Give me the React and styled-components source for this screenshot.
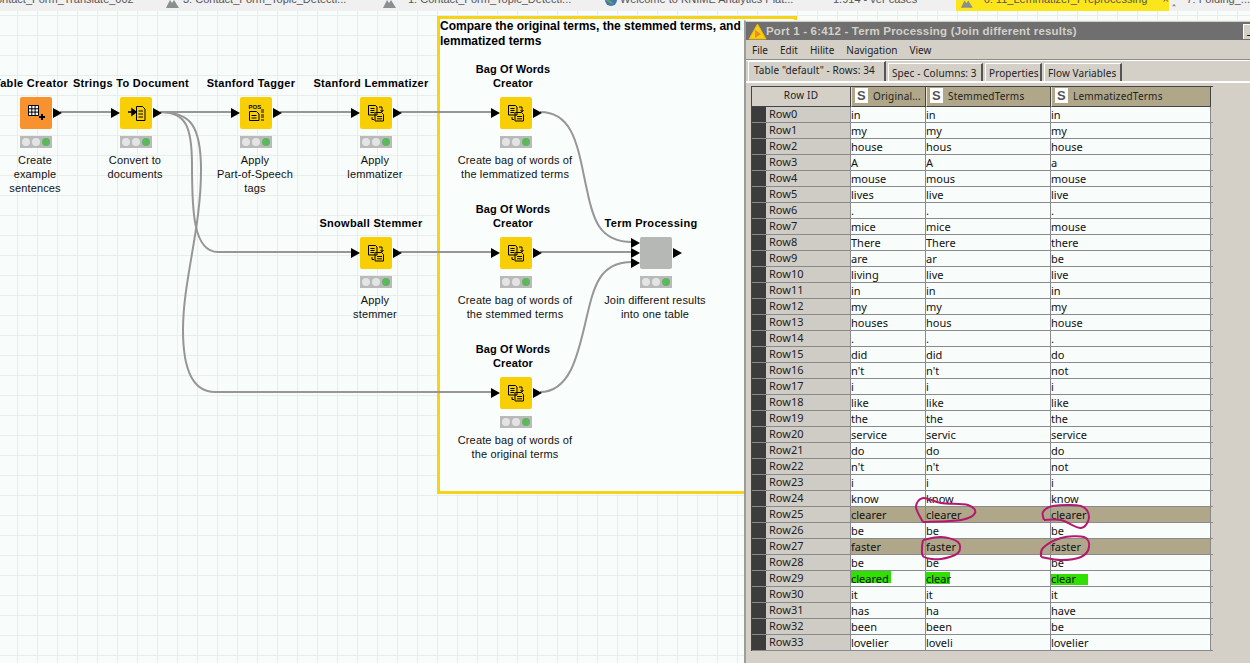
import React from 'react';
import styled, { createGlobalStyle } from 'styled-components';

const GlobalStyle = createGlobalStyle`
	html, body {
		margin: 0;
		padding: 0;
		height: 100%;
		overflow: hidden;
		background: #f8fcfa;
	}
	#root {
		height: 100%;
	}
`;

const tabs = [
	{ text: 'Contact_Form_Translate_002', width: 165, icon: 'none', indent: -12 },
	{ text: '3: Contact_Form_Topic_Detecti...', width: 217, icon: 'warn', indent: 2 },
	{ text: '1: Contact_Form_Topic_Detecti...', width: 222, icon: 'warn', indent: 10 },
	{ text: 'Welcome to KNIME Analytics Plat...', width: 229, icon: 'globe', indent: 2 },
	{ text: '1.914 - ver cases', width: 123, icon: 'none', indent: 0 },
	{ text: '6: 11_Lemmatizer_Preprocessing     ×', width: 213, icon: 'warn', indent: 9, pad: 4, active: true },
	{ text: '7: Folding_...', width: 81, icon: 'warn', indent: 10, pad: 3 },
];

const nodes = [
	{ x: 20, y: 86, title: ['Table Creator'], desc: ['Create', 'example', 'sentences'], icon: 'table', color: '#f7922e', ports: { in: [], out: true } },
	{ x: 120, y: 86, title: ['Strings To Document'], desc: ['Convert to', 'documents'], icon: 'convert', color: '#f8cf05', ports: { in: [16], out: true } },
	{ x: 240, y: 86, title: ['Stanford Tagger'], desc: ['Apply', 'Part-of-Speech', 'tags'], icon: 'pos', color: '#f8cf05', ports: { in: [16], out: true } },
	{ x: 360, y: 86, title: ['Stanford Lemmatizer'], desc: ['Apply', 'lemmatizer'], icon: 'docs', color: '#f8cf05', ports: { in: [16], out: true } },
	{ x: 500, y: 86, title: ['Bag Of Words', 'Creator'], desc: ['Create bag of words of', 'the lemmatized terms'], icon: 'docs', color: '#f8cf05', ports: { in: [16], out: true } },
	{ x: 360, y: 226, title: ['Snowball Stemmer'], desc: ['Apply', 'stemmer'], icon: 'docs', color: '#f8cf05', ports: { in: [16], out: true } },
	{ x: 500, y: 226, title: ['Bag Of Words', 'Creator'], desc: ['Create bag of words of', 'the stemmed terms'], icon: 'docs', color: '#f8cf05', ports: { in: [16], out: true } },
	{ x: 640, y: 226, title: ['Term Processing'], desc: ['Join different results', 'into one table'], icon: 'none', color: '#b5b8b5', ports: { in: [6, 16, 26], out: true } },
	{ x: 500, y: 366, title: ['Bag Of Words', 'Creator'], desc: ['Create bag of words of', 'the original terms'], icon: 'docs', color: '#f8cf05', ports: { in: [16], out: true } },
];

const wires = [
	'M60 101 H112',
	'M160 101 H232',
	'M280 101 H352',
	'M400 101 H492',
	'M400 241 H492',
	'M540 241 H632',
	'M540 101 C 575 101, 578 139, 587 179 C 593 209, 600 231, 632 231',
	'M540 381 C 570 381, 578 344, 586 309 C 594 274, 600 251, 632 251',
	'M160 101 C 185 101, 192 114, 192 154 C 192 199, 193 241, 218 241 H352',
	'M160 101 C 190 101, 201 114, 201 159 C 201 219, 183 269, 183 319 C 183 364, 195 381, 215 381 H492',
];

const rows = [
	['in', 'in', 'in'], ['my', 'my', 'my'], ['house', 'hous', 'house'], ['A', 'A', 'a'],
	['mouse', 'mous', 'mouse'], ['lives', 'live', 'live'], ['.', '.', '.'], ['mice', 'mice', 'mouse'],
	['There', 'There', 'there'], ['are', 'ar', 'be'], ['living', 'live', 'live'], ['in', 'in', 'in'],
	['my', 'my', 'my'], ['houses', 'hous', 'house'], ['.', '.', '.'], ['did', 'did', 'do'],
	["n't", "n't", 'not'], ['i', 'i', 'i'], ['like', 'like', 'like'], ['the', 'the', 'the'],
	['service', 'servic', 'service'], ['do', 'do', 'do'], ["n't", "n't", 'not'], ['i', 'i', 'i'],
	['know', 'know', 'know'], ['clearer', 'clearer', 'clearer'], ['be', 'be', 'be'], ['faster', 'faster', 'faster'],
	['be', 'be', 'be'], ['cleared', 'clear', 'clear'], ['it', 'it', 'it'], ['has', 'ha', 'have'],
	['been', 'been', 'be'], ['lovelier', 'loveli', 'lovelier'],
];

const selectedRows = [25, 27];
const markers = { 0: { width: 40, top: 0, height: 12 }, 1: { width: 24, top: 1, height: 12 }, 2: { width: 37, top: 3, height: 11 } };

const columns = [
	{ name: 'Original...' },
	{ name: 'StemmedTerms' },
	{ name: 'LemmatizedTerms' },
];

// pen circles, in table coordinates
const scribbles = [
	[[171, 436], [164, 421], [171, 412], [189, 417], [216, 419], [223, 427], [209, 434], [171, 436]],
	[[292, 434], [291, 426], [301, 420], [329, 420], [337, 431], [329, 442], [309, 434], [292, 434]],
	[[171, 454], [189, 451], [206, 456], [206, 467], [189, 473], [172, 471], [170, 462], [171, 454]],
	[[289, 471], [291, 462], [309, 452], [332, 451], [337, 461], [329, 471], [309, 474], [289, 471]],
];

const smooth = (pts) => {
	let d = `M${pts[0][0]} ${pts[0][1]}`;
	for (let i = 0; i < pts.length - 1; i++) {
		const p0 = pts[Math.max(i - 1, 0)];
		const p1 = pts[i];
		const p2 = pts[i + 1];
		const p3 = pts[Math.min(i + 2, pts.length - 1)];
		d += ` C${p1[0] + (p2[0] - p0[0]) / 6} ${p1[1] + (p2[1] - p0[1]) / 6}, ${p2[0] - (p3[0] - p1[0]) / 6} ${p2[1] - (p3[1] - p1[1]) / 6}, ${p2[0]} ${p2[1]}`;
	}
	return d;
};

const NodeIcon = ({ type }) => {
	if (type === 'table') {
		return (
			<svg width="32" height="32" viewBox="0 0 32 32">
				<path d="M8.5 8.5h10v10h-10zM8.5 11.8h10M8.5 15.1h10M11.8 8.5v10M15.1 8.5v10" fill="#fff" stroke="#000" />
				<path d="M19 20h6M22 17v6" stroke="#000" strokeWidth="2" fill="none" />
			</svg>
		);
	}
	if (type === 'convert') {
		return (
			<svg width="32" height="32" viewBox="0 0 32 32">
				<path d="M8 15h5M12 12l4 3-4 3z" stroke="#000" strokeWidth="1.5" fill="#000" />
				<path d="M16.5 9.5h6l2.5 2.5v11.5h-8.5zM18.5 14h4.5M18.5 17h4.5M18.5 20h4.5" stroke="#000" fill="none" />
			</svg>
		);
	}
	if (type === 'pos') {
		return (
			<svg width="32" height="32" viewBox="0 0 32 32">
				<text x="8.5" y="12" fontFamily="Liberation Sans, sans-serif" fontSize="6" fontWeight="700" fill="#000">POS</text>
				<path d="M9.5 14.5h7l2.5 2.5v6.5h-9.5zM11.5 18.5h5M11.5 21h5" stroke="#000" fill="none" />
				<path d="M21 13h3M21 15h3M21 18h3M21 20h3M21 23h3" stroke="#000" strokeWidth="1.2" fill="none" />
			</svg>
		);
	}
	if (type === 'docs') {
		return (
			<svg width="32" height="32" viewBox="0 0 32 32">
				<path d="M8.5 8.5h7l1.5 1.5v8h-8.5zM10.5 11.5h4M10.5 13.5h4M10.5 15.5h4" stroke="#000" fill="none" />
				<path d="M15.5 15.5h6l2 2v6.5h-8.500v-8zM17 19.5h5M17 21.8h5" stroke="#000" fill="none" />
				<path d="M19 10h3v4M20.5 13l1.5 2 1.5-2M12 20v2.5h2" stroke="#000" fill="none" />
			</svg>
		);
	}
	return null;
};

const TabIcon = ({ type }) => {
	if (type === 'warn') {
		return (
			<svg width="16" height="11" viewBox="0 0 16 11">
				<path d="M1 8L5 0L7 3L9 0L14 8Z" fill="#8a8f8f" />
			</svg>
		);
	}
	if (type === 'globe') {
		return (
			<svg width="14" height="11" viewBox="0 0 14 11">
				<circle cx="7" cy="0" r="6" fill="#3f78b0" />
				<path d="M3 0c2 2 4 1 5 4" stroke="#6ea05a" strokeWidth="2" fill="none" />
			</svg>
		);
	}
	return null;
};

const App = () => {
	return (
		<Page>
			<GlobalStyle />
			<TabStrip>
				{tabs.map((tab) => (
					<TabItem key={tab.text} $width={tab.width} $active={tab.active} $pad={tab.pad || 0}>
						<TabIcon type={tab.icon} />
						<TabText $indent={tab.indent}>{tab.text}</TabText>
					</TabItem>
				))}
			</TabStrip>
			<Canvas>
				<Annotation>Compare the original terms, the stemmed terms, and the lemmatized terms</Annotation>
				<Wires width="745" height="652" viewBox="0 0 745 652">
					{wires.map((d) => (
						<path key={d} d={d} fill="none" stroke="#969696" strokeWidth="2" />
					))}
				</Wires>
				{nodes.map((node) => (
					<NodeItem key={`${node.x}-${node.y}`} $x={node.x} $y={node.y}>
						<NodeTitle $stacked={node.title.length > 1}>
							{node.title.map((line) => (
								<div key={line}>{line}</div>
							))}
						</NodeTitle>
						<NodeBox $color={node.color}>
							{node.ports.in.map((top) => (
								<InPort key={top} $top={top} />
							))}
							{node.ports.out && <OutPort />}
							<NodeIcon type={node.icon} />
						</NodeBox>
						<StatusLights>
							<Light />
							<Light />
							<Light $on />
						</StatusLights>
						<NodeDesc>
							{node.desc.map((line) => (
								<div key={line}>{line}</div>
							))}
						</NodeDesc>
					</NodeItem>
				))}
				<PortWindow>
					<TitleBar>
						<svg width="19" height="17" viewBox="0 0 19 17">
							<path d="M9.5 1L18 16H1Z" fill="#f7cf1a" stroke="#e8b800" />
							<path d="M7 7l6 4-6 4z" fill="#f08a1e" />
						</svg>
						<TitleText>Port 1 - 6:412 - Term Processing (Join different results)</TitleText>
						<MinButton>_</MinButton>
					</TitleBar>
					<MenuBar>
						<MenuItem>File</MenuItem>
						<MenuItem>Edit</MenuItem>
						<MenuItem>Hilite</MenuItem>
						<MenuItem>Navigation</MenuItem>
						<MenuItem>View</MenuItem>
					</MenuBar>
					<PortTabs>
						<PortTab $active $width={138}>Table "default" - Rows: 34</PortTab>
						<PortTab $width={95}>Spec - Columns: 3</PortTab>
						<PortTab $width={57}>Properties</PortTab>
						<PortTab $width={78}>Flow Variables</PortTab>
					</PortTabs>
					<TableWrap>
						<HeaderRow>
							<RowIdHead>Row ID</RowIdHead>
							{columns.map((col) => (
								<ColHead key={col.name}>
									<TypeBadge>S</TypeBadge>
									<span>{col.name}</span>
								</ColHead>
							))}
						</HeaderRow>
						{rows.map((cells, i) => (
							<DataRow key={`Row${i}`}>
								<RowStrip />
								<RowId>{`Row${i}`}</RowId>
								{cells.map((cell, c) => (
									<Cell key={c} $selected={selectedRows.includes(i)}>
										{i === 29 && (
											<Marker style={{ width: markers[c].width, top: markers[c].top, height: markers[c].height }} />
										)}
										<CellText>{cell}</CellText>
									</Cell>
								))}
							</DataRow>
						))}
						<Scribbles width="461" height="564" viewBox="0 0 461 564">
							{scribbles.map((pts) => (
								<path key={pts[0].join()} d={smooth(pts)} fill="none" stroke="#b3196e" strokeWidth="2" />
							))}
						</Scribbles>
					</TableWrap>
				</PortWindow>
			</Canvas>
		</Page>
	);
};

const Page = styled.div`
	display: flex;
	flex-direction: column;
	height: 663px;
	width: 1250px;
	overflow: hidden;
	font-family: 'Liberation Sans', Arial, sans-serif;
`;

const TabStrip = styled.div`
	display: flex;
	height: 11px;
	flex: none;
	overflow: hidden;
	background: #f0f0f0;
`;

const TabItem = styled.div`
	display: flex;
	align-items: flex-start;
	flex: none;
	width: ${(p) => p.$width}px;
	height: 11px;
	background: ${(p) => (p.$active ? '#fce51a' : 'transparent')};
	padding-left: ${(p) => p.$pad}px;
	box-sizing: border-box;
	overflow: hidden;
`;

const TabText = styled.span`
	font-size: 11px;
	line-height: 14px;
	margin-top: -8px;
	white-space: pre;
	color: #555;
	margin-left: ${(p) => p.$indent}px;
`;

const Canvas = styled.div`
	position: relative;
	flex: 1;
	background-color: #f8fcfa;
	background-image: linear-gradient(#e8eeea 1px, transparent 1px), linear-gradient(90deg, #e8eeea 1px, transparent 1px);
	background-size: 20px 20px;
	background-position: 17px 4px;
`;

const Annotation = styled.div`
	position: absolute;
	left: 437px;
	top: 5px;
	width: 360px;
	height: 478px;
	box-sizing: border-box;
	border: 3px solid #f6d316;
	background: #f9fdfb;
	font-size: 12px;
	font-weight: 700;
	line-height: 15px;
	color: #000;
	padding-right: 25px;
`;

const Wires = styled.svg`
	position: absolute;
	left: 0;
	top: 0;
`;

const NodeItem = styled.div`
	position: absolute;
	left: ${(p) => p.$x + 16 - 80}px;
	top: ${(p) => p.$y - 35}px;
	width: 160px;
	display: flex;
	flex-direction: column;
	align-items: center;
`;

const NodeTitle = styled.div`
	height: 28px;
	display: flex;
	flex-direction: column;
	justify-content: flex-end;
	font-size: 11px;
	font-weight: 700;
	line-height: 14px;
	letter-spacing: ${(p) => (p.$stacked ? 0.1 : 0.3)}px;
	color: #000;
	text-align: center;
	white-space: nowrap;
	margin-right: ${(p) => (p.$stacked ? 6 : 10)}px;
`;

const NodeBox = styled.div`
	position: relative;
	width: 32px;
	height: 32px;
	margin-top: 7px;
	border-radius: 2px;
	background: ${(p) => p.$color};
`;

const InPort = styled.div`
	position: absolute;
	left: -9px;
	top: ${(p) => p.$top - 5}px;
	width: 0;
	height: 0;
	border-left: 9px solid #000;
	border-top: 5px solid transparent;
	border-bottom: 5px solid transparent;
`;

const OutPort = styled.div`
	position: absolute;
	right: -10px;
	top: 11px;
	width: 0;
	height: 0;
	border-left: 9px solid #000;
	border-top: 5px solid transparent;
	border-bottom: 5px solid transparent;
`;

const StatusLights = styled.div`
	display: flex;
	align-items: center;
	justify-content: center;
	gap: 2px;
	width: 32px;
	height: 12px;
	margin-top: 7px;
	background: #b9bab9;
`;

const Light = styled.span`
	width: 8px;
	height: 8px;
	border-radius: 50%;
	background: ${(p) => (p.$on ? '#5cb85c' : '#e4e4e4')};
`;

const NodeDesc = styled.div`
	margin-top: 5px;
	padding-right: 2px;
	font-size: 11px;
	line-height: 14px;
	letter-spacing: 0.15px;
	color: #111;
	text-align: center;
	white-space: nowrap;
`;

const PortWindow = styled.div`
	position: absolute;
	left: 744px;
	top: 9px;
	width: 520px;
	height: 650px;
	box-sizing: border-box;
	background: #d4d0c8;
	border-left: 2px solid #9c9c98;
	border-top: 1px solid #f4f4f0;
	padding-top: 1px;
	font-family: 'Noto Sans', 'Liberation Sans', sans-serif;
	color: #222;
`;

const TitleBar = styled.div`
	display: flex;
	align-items: center;
	height: 18px;
	background: #6f6f6f;
	padding-left: 2px;
	position: relative;
`;

const TitleText = styled.span`
	font-size: 11.5px;
	font-weight: 700;
	color: #d4d0c8;
	white-space: nowrap;
	margin-left: -1px;
	letter-spacing: 0.2px;
	font-family: 'Liberation Sans', sans-serif;
`;

const MinButton = styled.span`
	position: absolute;
	left: 497px;
	top: 2px;
	width: 14px;
	height: 14px;
	background: #d4d0c8;
	border-top: 1px solid #fff;
	border-left: 1px solid #fff;
	font-size: 12px;
	font-weight: 700;
	line-height: 10px;
	text-indent: 3px;
	color: #000;
`;

const MenuBar = styled.div`
	display: flex;
	align-items: center;
	gap: 12px;
	height: 20px;
	padding-left: 6px;
	border-bottom: 1px solid #8c8c88;
	box-shadow: 0 1px 0 #fff;
	box-sizing: border-box;
`;

const MenuItem = styled.span`
	font-size: 10px;
	line-height: 14px;
`;

const PortTabs = styled.div`
	display: flex;
	align-items: flex-end;
	gap: 2px;
	height: 23px;
	padding-left: 2px;
	border-bottom: 2px solid #fff;
	box-sizing: border-box;
`;

const PortTab = styled.div`
	box-sizing: border-box;
	width: ${(p) => p.$width}px;
	height: ${(p) => (p.$active ? 20 : 18)}px;
	padding-left: ${(p) => (p.$active ? 5 : 3)}px;
	font-size: 10px;
	letter-spacing: 0.1px;
	line-height: ${(p) => (p.$active ? 17 : 19)}px;
	white-space: nowrap;
	overflow: hidden;
	border-top: 1px solid #fff;
	border-left: 1px solid #fff;
	border-right: 2px solid #555;
`;

const TableWrap = styled.div`
	position: relative;
	width: 461px;
	margin: 3px 0 0 5px;
	border-left: 1px solid #444;
	font-size: 11px;
`;

const HeaderRow = styled.div`
	display: grid;
	grid-template-columns: 99px 75px 125px 160px;
	height: 21px;
	border-top: 1px solid #444;
	box-sizing: border-box;
	font-size: 10px;
	letter-spacing: 0.2px;
`;

const RowIdHead = styled.div`
	background: #d4d0c8;
	border-right: 1px solid #444;
	border-bottom: 1px solid #444;
	text-align: center;
	line-height: 16px;
	box-sizing: border-box;
`;

const ColHead = styled.div`
	display: flex;
	align-items: center;
	gap: 5px;
	padding: 0 0 2px 3px;
	background: #b0a78a;
	border-right: 1px solid #444;
	border-bottom: 1px solid #444;
	border-left: 1px solid #e8e4d8;
	box-sizing: border-box;
	white-space: nowrap;
	overflow: hidden;
`;

const TypeBadge = styled.span`
	flex: none;
	width: 13px;
	height: 15px;
	background: #fff;
	color: #555;
	font-family: 'Liberation Sans', sans-serif;
	font-size: 13px;
	font-weight: 700;
	line-height: 15px;
	text-align: center;
`;

const DataRow = styled.div`
	display: grid;
	grid-template-columns: 14px 85px 75px 125px 160px;
	height: 16px;
	box-sizing: border-box;
	border-bottom: 1px solid #8a8a8a;
`;

const RowStrip = styled.div`
	background: #3c3c3c;
`;

const RowId = styled.div`
	background: #cfccc6;
	padding-left: 3px;
	line-height: 14px;
	border-right: 1px solid #8a8a8a;
`;

const Cell = styled.div`
	position: relative;
	line-height: 16px;
	background: ${(p) => (p.$selected ? '#b0a78a' : '#f8fdfb')};
	border-right: 1px solid #8a8a8a;
	color: #111;
	overflow: hidden;
`;

const CellText = styled.span`
	position: relative;
`;

const Marker = styled.span`
	position: absolute;
	left: 0;
	background: #2fe000;
`;

const Scribbles = styled.svg`
	position: absolute;
	left: 0;
	top: 0;
	overflow: visible;
	pointer-events: none;
`;

export default App;
